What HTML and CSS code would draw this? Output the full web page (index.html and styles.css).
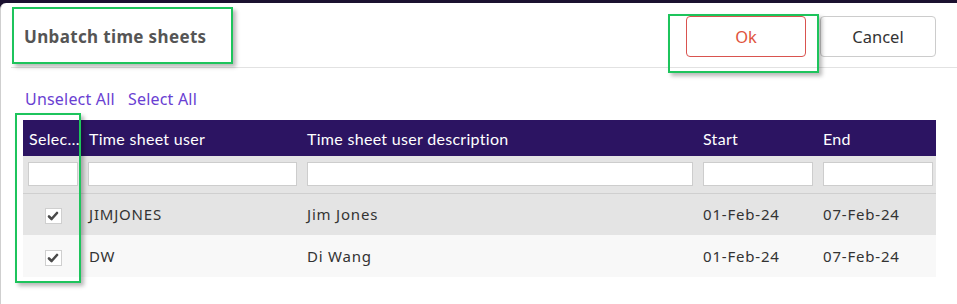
FILE: index.html
```html
<!DOCTYPE html>
<html>
<head>
<meta charset="utf-8">
<link rel="stylesheet" href="styles.css">
</head>
<body>
<div class="dialog">
  <div class="dlg-head">
    <h1 class="title">Unbatch time sheets</h1>
    <div class="actions">
      <button class="btn btn-ok">Ok</button>
      <button class="btn btn-cancel">Cancel</button>
    </div>
  </div>
  <div class="dlg-body">
    <div class="links">
      <a class="link">Unselect All</a>
      <a class="link">Select All</a>
    </div>
    <table class="grid">
      <colgroup>
        <col class="c1"><col class="c2"><col class="c3"><col class="c4"><col class="c5">
      </colgroup>
      <thead>
        <tr class="hdr">
          <th class="th-sel"><span class="ell">Selected</span></th>
          <th>Time sheet user</th>
          <th>Time sheet user description</th>
          <th>Start</th>
          <th>End</th>
        </tr>
        <tr class="filter">
          <td><input class="fin" type="text"></td>
          <td><input class="fin" type="text"></td>
          <td><input class="fin" type="text"></td>
          <td><input class="fin" type="text"></td>
          <td><input class="fin" type="text"></td>
        </tr>
      </thead>
      <tbody>
        <tr class="row row-a">
          <td class="chkcell"><span class="chk"><svg viewBox="0 0 12 12" width="12" height="12"><path d="M2 6.5 L4.6 9 L10 3" fill="none" stroke="#4a4a4a" stroke-width="2.6" stroke-linecap="round" stroke-linejoin="round"/></svg></span></td>
          <td>JIMJONES</td>
          <td>Jim Jones</td>
          <td>01-Feb-24</td>
          <td>07-Feb-24</td>
        </tr>
        <tr class="row row-b">
          <td class="chkcell"><span class="chk"><svg viewBox="0 0 12 12" width="12" height="12"><path d="M2 6.5 L4.6 9 L10 3" fill="none" stroke="#4a4a4a" stroke-width="2.6" stroke-linecap="round" stroke-linejoin="round"/></svg></span></td>
          <td>DW</td>
          <td>Di Wang</td>
          <td>01-Feb-24</td>
          <td>07-Feb-24</td>
        </tr>
      </tbody>
    </table>
  </div>
  <div class="hl hl-title"></div>
  <div class="hl hl-ok"></div>
  <div class="hl hl-col"></div>
</div>
</body>
</html>
```
FILE: styles.css
```css
html, body {
  margin: 0;
  padding: 0;
}
body {
  background: #1b1130;
  width: 957px;
  height: 304px;
  overflow: hidden;
  font-family: "Noto Sans", "Liberation Sans", sans-serif;
}
.dialog {
  position: relative;
  margin-top: 3px;
  height: 301px;
  background: #ffffff;
  border-left: 1px solid #cfcfcf;
  border-top-left-radius: 6px;
  box-sizing: border-box;
}
.dlg-head {
  display: flex;
  align-items: center;
  justify-content: space-between;
  height: 65px;
  margin-left: 10px;
  padding-left: 13px;
  padding-right: 21px;
  padding-top: 3px;
  border-bottom: 1px solid #e2e2e2;
  box-sizing: border-box;
}
.title {
  margin: 0;
  font-size: 17px;
  font-weight: 700;
  letter-spacing: 0.35px;
  color: #555555;
}
.actions {
  display: flex;
  gap: 14px;
}
.btn {
  height: 41px;
  border-radius: 4px;
  background: #ffffff;
  font-family: "Noto Sans", "Liberation Sans", sans-serif;
  font-size: 16.5px;
  cursor: pointer;
}
.btn-ok {
  width: 120px;
  border: 1px solid #d9534f;
  color: #e0533d;
}
.btn-cancel {
  width: 116px;
  border: 1px solid #cccccc;
  color: #333333;
}
.dlg-body {
  padding: 20px 0 0 22px;
}
.links {
  display: flex;
  gap: 13px;
  height: 32px;
  font-size: 16px;
  letter-spacing: 0.2px;
  line-height: 22px;
  margin-left: 2px;
}
.link {
  color: #6a3fd2;
  cursor: pointer;
}
.grid {
  border-collapse: collapse;
  table-layout: fixed;
  width: 913px;
}
.c1 { width: 60px; }
.c2 { width: 219px; }
.c3 { width: 396px; }
.c4 { width: 120px; }
.c5 { width: 118px; }
.hdr th {
  background: #2c1462;
  color: #ffffff;
  font-family: "Lato", "Noto Sans", sans-serif;
  font-weight: 400;
  font-size: 16px;
  letter-spacing: 0.3px;
  text-align: left;
  height: 36px;
  padding: 0 5px;
  box-sizing: border-box;
  white-space: nowrap;
}
.hdr th.th-sel {
  padding-left: 6px;
  padding-right: 1px;
}
.hdr th:nth-child(2) { padding-left: 6px; }
.ell {
  display: block;
  overflow: hidden;
  text-overflow: ellipsis;
  white-space: nowrap;
}
.filter td {
  background: #e4e4e4;
  height: 37px;
  padding: 0 5px;
  border-bottom: 1px solid #cfcfcf;
  box-sizing: border-box;
}
.filter td:last-child { padding-right: 3px; }
.fin {
  display: block;
  width: 100%;
  height: 24px;
  box-sizing: border-box;
  border: 1px solid #cdcdcd;
  background: #ffffff;
  margin: 0;
  padding: 0;
}
.row td {
  height: 42px;
  padding: 0 5px;
  font-size: 15px;
  letter-spacing: 0.8px;
  color: #333333;
  box-sizing: border-box;
  white-space: nowrap;
}
.row td:nth-child(2) { padding-left: 6px; }
.row-a td { background: #e4e4e4; }
.row-b td { background: #f8f8f8; }
.chkcell { text-align: center; }
.chk {
  display: inline-flex;
  align-items: center;
  justify-content: center;
  width: 17px;
  height: 16px;
  box-sizing: border-box;
  border: 1px solid #cfcfcf;
  background: #ffffff;
  vertical-align: middle;
}
.hl {
  position: absolute;
  border: 2px solid #1dc45c;
  box-shadow: 3px 3px 4px rgba(0, 0, 0, 0.28);
  box-sizing: border-box;
  pointer-events: none;
}
.hl-title {
  left: 11px;
  top: 4px;
  width: 221px;
  height: 57px;
}
.hl-ok {
  left: 667px;
  top: 11px;
  width: 151px;
  height: 59px;
}
.hl-col {
  left: 14px;
  top: 110px;
  width: 66px;
  height: 170px;
}
```
